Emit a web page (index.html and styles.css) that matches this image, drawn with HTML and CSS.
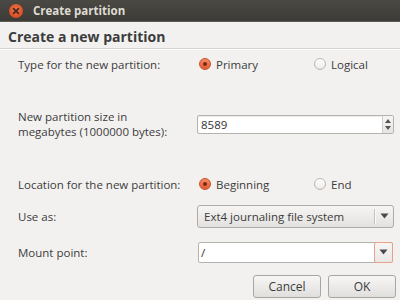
FILE: index.html
```html
<!DOCTYPE html>
<html>
<head>
<meta charset="utf-8">
<link rel="stylesheet" href="styles.css">
</head>
<body>
<div class="window">
  <div class="titlebar">
    <span class="close"><svg width="14" height="14" viewBox="0 0 14 14"><path d="M4.6 4.6 L9.4 9.4 M9.4 4.6 L4.6 9.4" stroke="#3b2a22" stroke-width="1.6" stroke-linecap="round"/></svg></span>
    <span class="title">Create partition</span>
  </div>
  <div class="content">
    <h1 class="heading">Create a new partition</h1>
    <div class="sep"></div>
    <div class="form">
      <div class="row r-type">
        <div class="label">Type for the new partition:</div>
        <div class="control radios">
          <label class="radio"><span class="dot on"></span>Primary</label>
          <label class="radio"><span class="dot"></span>Logical</label>
        </div>
      </div>
      <div class="row r-size">
        <div class="label"><div>New partition size in</div><div>megabytes (1000000 bytes):</div></div>
        <div class="control">
          <div class="spin">
            <span class="spin-val">8589</span>
            <span class="spin-btn"><svg width="8" height="13" viewBox="0 0 8 13"><path d="M4 1 L7 5 L1 5 Z" fill="#555"/><path d="M4 12 L7 8 L1 8 Z" fill="#555"/></svg></span>
          </div>
        </div>
      </div>
      <div class="row r-loc">
        <div class="label">Location for the new partition:</div>
        <div class="control radios">
          <label class="radio"><span class="dot on"></span>Beginning</label>
          <label class="radio"><span class="dot"></span>End</label>
        </div>
      </div>
      <div class="row r-use">
        <div class="label">Use as:</div>
        <div class="control">
          <div class="combo">
            <span class="combo-text">Ext4 journaling file system</span>
            <span class="combo-sep"></span>
            <span class="combo-arrow"><svg width="9" height="6" viewBox="0 0 9 6"><path d="M0.5 0.5 L8.5 0.5 L4.5 5.5 Z" fill="#4a4a4a"/></svg></span>
          </div>
        </div>
      </div>
      <div class="row r-mount">
        <div class="label">Mount point:</div>
        <div class="control">
          <div class="entrycombo">
            <span class="entry-text">/</span>
            <span class="entry-btn"><svg width="9" height="6" viewBox="0 0 9 6"><path d="M0.5 0.5 L8.5 0.5 L4.5 5.5 Z" fill="#4a4a4a"/></svg></span>
          </div>
        </div>
      </div>
    </div>
    <div class="buttons">
      <button class="btn cancel">Cancel</button>
      <button class="btn ok">OK</button>
    </div>
  </div>
</div>
</body>
</html>
```

FILE: styles.css
```css
html, body {
  margin: 0;
  padding: 0;
  width: 400px;
  height: 300px;
  overflow: hidden;
  background: #f2f1f0;
  font-family: "Open Sans", "DejaVu Sans", sans-serif;
  font-size: 11.5px;
  color: #3c3c3c;
}
.window {
  width: 400px;
  height: 300px;
  display: flex;
  flex-direction: column;
}
.titlebar {
  height: 22px;
  background: linear-gradient(#4a4944, #3c3b37);
  border-bottom: 1px solid #5b5a55;
  display: flex;
  align-items: center;
  box-sizing: border-box;
  padding-left: 9px;
}
.close {
  width: 14px;
  height: 14px;
  border-radius: 50%;
  background: radial-gradient(circle at 50% 40%, #f47a4f, #e0522a 60%, #c2421e);
  display: flex;
  margin-right: 10px;
}
.title {
  color: #dfdbd2;
  font-weight: bold;
  font-size: 11.5px;
}
.content {
  flex: 1;
  display: flex;
  flex-direction: column;
}
.heading {
  margin: 0;
  padding: 5px 0 0 8px;
  height: 21px;
  font-size: 14px;
  line-height: 19px;
  font-weight: bold;
  color: #3c3c3c;
}
.sep {
  height: 1px;
  background: #d6d4d0;
  border-bottom: 1px solid #ffffff;
}
.form {
  display: flex;
  flex-direction: column;
  padding-left: 18px;
  padding-right: 6px;
}
.row {
  display: flex;
  align-items: center;
}
.label {
  width: 179px;
  flex: none;
  line-height: 15px;
}
.control {
  flex: 1;
  display: flex;
  align-items: center;
}
.r-type { margin-top: 4px; height: 20px; }
.r-size { margin-top: 34px; height: 32px; }
.r-loc { margin-top: 34px; height: 20px; }
.r-use { margin-top: 10px; height: 24px; }
.r-mount { margin-top: 13px; height: 22px; }
.radio {
  display: flex;
  align-items: center;
  padding-left: 2px;
}
.radio:first-child {
  width: 113px;
  flex: none;
}
.dot {
  width: 12px;
  height: 12px;
  border-radius: 50%;
  box-sizing: border-box;
  border: 1px solid #b9b7b3;
  background: linear-gradient(#ffffff, #ebeae8);
  margin-right: 5px;
  position: relative;
}
.dot.on {
  border: 1px solid #c9502a;
  background: linear-gradient(#f38a65, #e35c34);
}
.dot.on::after {
  content: "";
  position: absolute;
  left: 3px;
  top: 3px;
  width: 4px;
  height: 4px;
  border-radius: 50%;
  background: #7a2a14;
}
.spin {
  width: 197px;
  height: 19px;
  box-sizing: border-box;
  border: 1px solid #b5b3af;
  background: #fff;
  border-radius: 2px;
  display: flex;
  align-items: center;
  box-shadow: inset 0 1px 1px rgba(0,0,0,0.08);
}
.spin-val {
  flex: 1;
  padding-left: 3px;
  color: #333;
}
.spin-btn {
  width: 10px;
  height: 17px;
  border-left: 1px solid #d0cecb;
  background: linear-gradient(#f6f5f4, #e6e5e3);
  display: flex;
  align-items: center;
  justify-content: center;
}
.combo {
  width: 197px;
  height: 23px;
  box-sizing: border-box;
  border: 1px solid #aeaca8;
  border-radius: 3px;
  background: linear-gradient(#f6f5f4, #e3e2e0);
  display: flex;
  align-items: center;
}
.combo-text {
  flex: 1;
  padding-left: 6px;
  color: #3c3c3c;
}
.combo-sep {
  width: 1px;
  height: 15px;
  background: #c4c2be;
  border-right: 1px solid #fafafa;
}
.combo-arrow {
  width: 17px;
  display: flex;
  justify-content: center;
}
.entrycombo {
  width: 195px;
  height: 21px;
  box-sizing: border-box;
  border: 1px solid #b5b3af;
  border-radius: 2px;
  background: #fff;
  display: flex;
  align-items: center;
  margin-left: 1px;
}
.entry-text {
  flex: 1;
  padding-left: 2px;
  color: #333;
}
.entry-btn {
  width: 19px;
  height: 21px;
  box-sizing: border-box;
  margin-right: -1px;
  border: 1px solid #e9a287;
  border-radius: 2px;
  background: linear-gradient(#f7f6f5, #e9e8e6);
  display: flex;
  align-items: center;
  justify-content: center;
}
.buttons {
  display: flex;
  justify-content: flex-end;
  gap: 7px;
  padding-right: 4px;
  margin-top: 12px;
}
.btn {
  height: 23px;
  width: 68px;
  box-sizing: border-box;
  border: 1px solid #a8a6a2;
  border-radius: 3px;
  background: linear-gradient(#f7f6f5, #e0dfdd);
  font-family: "Open Sans", "DejaVu Sans", sans-serif;
  font-size: 12px;
  color: #3c3c3c;
  padding: 0;
}
```
